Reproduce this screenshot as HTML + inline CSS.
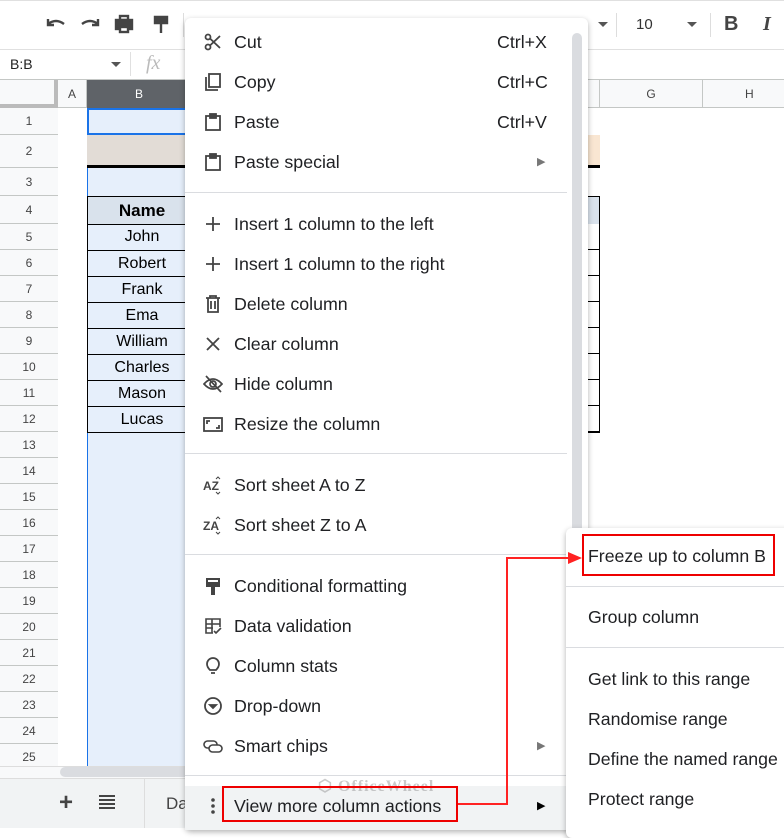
<!DOCTYPE html>
<html><head><meta charset="utf-8"><style>
*{margin:0;padding:0;box-sizing:border-box}
body{width:784px;height:828px;overflow:hidden;background:#fff;font-family:"Liberation Sans",Arial,sans-serif;position:relative;color:#202124}
.a{position:absolute}
.rn{position:absolute;left:0;width:58px;background:#f8f9fa;border-bottom:1px solid #c4c7c5;font-size:12px;color:#444;text-align:center}
.cell{position:absolute;border:1px solid #000;font-size:16px;text-align:center;color:#000}
.mi{position:absolute;left:0;font-size:17.8px;color:#202124;white-space:nowrap}
.mi .t{position:absolute;left:49px;top:-10px;line-height:20px}
.mi .k{position:absolute;left:312px;top:-10px;line-height:20px}
.ic{position:absolute;left:18px;top:-10px;width:20px;height:20px}
.hr{position:absolute;left:0;width:382px;height:1px;background:#dadce0}
.si{position:absolute;left:22px;font-size:17.7px;line-height:20px;color:#202124;white-space:nowrap}
</style></head><body>
<div class="a" style="left:0;top:0;width:784px;height:50px;background:#fff;border-top:1px solid #e0e0e0"></div>
<svg class="a" style="left:40px;top:12px" width="140" height="26" viewBox="0 0 140 26" fill="none" stroke="#444" stroke-width="2.4">
<path d="M8 12 q8-6 16 0 M8 7 v6 h6"/><path d="M58 12 q-8-6-16 0 M58 7 v6 h-6"/>
<rect x="76" y="8" width="16" height="9" fill="#444"/><rect x="80" y="4" width="8" height="4"/><rect x="80" y="15" width="8" height="5" fill="#fff"/>
<path d="M115 5 h12 v6 h-12z M121 11 v10" fill="#444"/>
</svg>
<div class="a" style="left:183px;top:13px;width:1px;height:24px;background:#ddd"></div>
<div class="a" style="left:616px;top:13px;width:1px;height:24px;background:#ddd"></div>
<div class="a" style="left:710px;top:13px;width:1px;height:24px;background:#ddd"></div>
<div class="a" style="left:598px;top:22px;border:5px solid transparent;border-top:5px solid #555"></div>
<div class="a" style="left:636px;top:16px;font-size:15px;color:#333">10</div>
<div class="a" style="left:687px;top:22px;border:5px solid transparent;border-top:5px solid #555"></div>
<div class="a" style="left:724px;top:13px;font-size:20px;font-weight:bold;color:#444">B</div>
<div class="a" style="left:763px;top:13px;font-size:20px;font-style:italic;font-weight:bold;color:#444;font-family:'Liberation Serif',serif">I</div>
<div class="a" style="left:0;top:49px;width:784px;height:1px;background:#e0e0e0"></div>
<div class="a" style="left:10px;top:56px;font-size:14px;color:#222">B:B</div>
<div class="a" style="left:111px;top:62px;border:5px solid transparent;border-top:5px solid #555"></div>
<div class="a" style="left:130px;top:52px;width:1px;height:24px;background:#e0e0e0"></div>
<div class="a" style="left:146px;top:52px;font-size:20px;font-style:italic;color:#bbb;font-family:'Liberation Serif',serif">fx</div>
<div class="a" style="left:0;top:79px;width:784px;height:1px;background:#c4c7c5"></div>
<div class="a" style="left:0;top:80px;width:58px;height:28px;background:#f8f9fa;border-right:4px solid #bbb;border-bottom:4px solid #bbb"></div>
<div class="a" style="left:58px;top:80px;width:29px;height:28px;background:#f8f9fa;border-right:1px solid #c4c7c5;border-bottom:1px solid #c4c7c5;font-size:12px;text-align:center;line-height:28px;color:#444">A</div>
<div class="a" style="left:87px;top:80px;width:110px;height:28px;background:#5f6368;color:#fff;font-size:12px;text-align:center;line-height:28px"><span style="position:absolute;left:48px">B</span></div>
<div class="a" style="left:588px;top:80px;width:196px;height:28px;background:#f8f9fa;border-bottom:1px solid #c4c7c5"></div>
<div class="a" style="left:599px;top:80px;width:104px;height:28px;border-left:1px solid #c4c7c5;border-right:1px solid #c4c7c5;font-size:12px;text-align:center;line-height:28px;color:#444">G</div>
<div class="a" style="left:745px;top:80px;font-size:12px;line-height:28px;color:#444">H</div>
<div class="a" style="left:0;top:108px;width:58px;height:658px;background:#f8f9fa;border-right:1px solid #c4c7c5"></div>
<div class="rn" style="top:108px;height:27px;line-height:27px">1</div>
<div class="rn" style="top:135px;height:33px;line-height:33px">2</div>
<div class="rn" style="top:168px;height:28px;line-height:28px">3</div>
<div class="rn" style="top:196px;height:28px;line-height:28px">4</div>
<div class="rn" style="top:224px;height:26px;line-height:26px">5</div>
<div class="rn" style="top:250px;height:26px;line-height:26px">6</div>
<div class="rn" style="top:276px;height:26px;line-height:26px">7</div>
<div class="rn" style="top:302px;height:26px;line-height:26px">8</div>
<div class="rn" style="top:328px;height:26px;line-height:26px">9</div>
<div class="rn" style="top:354px;height:26px;line-height:26px">10</div>
<div class="rn" style="top:380px;height:26px;line-height:26px">11</div>
<div class="rn" style="top:406px;height:26px;line-height:26px">12</div>
<div class="rn" style="top:432px;height:26px;line-height:26px">13</div>
<div class="rn" style="top:458px;height:26px;line-height:26px">14</div>
<div class="rn" style="top:484px;height:26px;line-height:26px">15</div>
<div class="rn" style="top:510px;height:26px;line-height:26px">16</div>
<div class="rn" style="top:536px;height:26px;line-height:26px">17</div>
<div class="rn" style="top:562px;height:26px;line-height:26px">18</div>
<div class="rn" style="top:588px;height:26px;line-height:26px">19</div>
<div class="rn" style="top:614px;height:26px;line-height:26px">20</div>
<div class="rn" style="top:640px;height:26px;line-height:26px">21</div>
<div class="rn" style="top:666px;height:26px;line-height:26px">22</div>
<div class="rn" style="top:692px;height:26px;line-height:26px">23</div>
<div class="rn" style="top:718px;height:26px;line-height:26px">24</div>
<div class="rn" style="top:744px;height:22px;line-height:26px;border-bottom:none">25</div>
<div class="a" style="left:87px;top:108px;width:110px;height:658px;background:#e6effb;border-left:1px solid #1a73e8"></div>
<div class="a" style="left:87px;top:108px;width:110px;height:27px;border:2px solid #1a73e8"></div>
<div class="a" style="left:87px;top:135px;width:513px;height:33px;background:#f9e6d2;border-bottom:3px solid #000"></div>
<div class="a" style="left:87px;top:135px;width:110px;height:33px;background:#e2dcd6;border-bottom:3px solid #000"></div>
<div class="cell" style="left:87px;top:196px;width:513px;height:29px;background:#d9e2ec"></div>
<div class="cell" style="left:87px;top:196px;width:110px;height:29px;font-weight:bold;font-size:17px;line-height:27px">Name</div>
<div class="cell" style="left:87px;top:224px;width:513px;height:209px;border-top:none"></div>
<div class="cell" style="left:87px;top:224px;width:110px;height:27px;line-height:26px;border-top:none">John</div>
<div class="cell" style="left:87px;top:250px;width:110px;height:27px;line-height:26px">Robert</div>
<div class="cell" style="left:87px;top:276px;width:110px;height:27px;line-height:26px">Frank</div>
<div class="cell" style="left:87px;top:302px;width:110px;height:27px;line-height:26px">Ema</div>
<div class="cell" style="left:87px;top:328px;width:110px;height:27px;line-height:26px">William</div>
<div class="cell" style="left:87px;top:354px;width:110px;height:27px;line-height:26px">Charles</div>
<div class="cell" style="left:87px;top:380px;width:110px;height:27px;line-height:26px">Mason</div>
<div class="cell" style="left:87px;top:406px;width:110px;height:27px;line-height:26px">Lucas</div>
<div class="a" style="left:588px;top:224px;width:12px;height:209px;border-bottom:1px solid #000;border-right:1px solid #000;background:repeating-linear-gradient(#fff 0 25px,#000 25px 26px)"></div>
<div class="a" style="left:0;top:766px;width:784px;height:12px;background:#f8f9fa;border-top:1px solid #ddd"></div>
<div class="a" style="left:60px;top:767px;width:130px;height:10px;background:#dadce0;border-radius:5px"></div>
<div class="a" style="left:0;top:778px;width:784px;height:50px;background:#f1f3f4;border-top:1px solid #ddd"></div>
<div class="a" style="left:59px;top:789px;font-size:24px;color:#444;font-weight:bold">+</div>
<div class="a" style="left:99px;top:795px;width:16px;height:14px;background:repeating-linear-gradient(#444 0 2px,transparent 2px 4px)"></div>
<div class="a" style="left:144px;top:778px;width:1px;height:50px;background:#ddd"></div>
<div class="a" style="left:166px;top:794px;font-size:17px;color:#444">Da</div>
<div class="a" style="left:185px;top:18px;width:403px;height:812px;background:#fff;border-radius:6px;box-shadow:0 2px 6px rgba(0,0,0,.3)">
<div class="a" style="left:387px;top:15px;width:10px;height:797px;background:#dadce0;border-radius:5px"></div>
<div class="a" style="left:0;top:768px;width:387px;height:44px;background:#f1f3f4"></div>
<div class="mi" style="top:24px"><svg class="ic" viewBox="0 0 20 20" fill="none" stroke="#444" stroke-width="1.8"><circle cx="5" cy="5" r="2.5"/><circle cx="5" cy="15" r="2.5"/><path d="M7 6.5 L17 16 M7 13.5 L17 4"/></svg><span class="t">Cut</span><span class="k">Ctrl+X</span></div>
<div class="mi" style="top:64px"><svg class="ic" viewBox="0 0 20 20" fill="none" stroke="#444" stroke-width="1.8"><path d="M3 5 v13 h12"/><rect x="6" y="2" width="11" height="13"/></svg><span class="t">Copy</span><span class="k">Ctrl+C</span></div>
<div class="mi" style="top:104px"><svg class="ic" viewBox="0 0 20 20" fill="none" stroke="#444" stroke-width="1.8"><rect x="3" y="4" width="14" height="14"/><rect x="7" y="2" width="6" height="4" fill="#444"/></svg><span class="t">Paste</span><span class="k">Ctrl+V</span></div>
<div class="mi" style="top:144px"><svg class="ic" viewBox="0 0 20 20" fill="none" stroke="#444" stroke-width="1.8"><rect x="3" y="4" width="14" height="14"/><rect x="7" y="2" width="6" height="4" fill="#444"/></svg><span class="t">Paste special</span><span class="k" style="left:352px;font-size:11px;color:#777">▶</span></div>
<div class="hr" style="top:174px"></div>
<div class="mi" style="top:206px"><svg class="ic" viewBox="0 0 20 20" stroke="#444" stroke-width="1.8"><path d="M10 3 v14 M3 10 h14"/></svg><span class="t">Insert 1 column to the left</span></div>
<div class="mi" style="top:246px"><svg class="ic" viewBox="0 0 20 20" stroke="#444" stroke-width="1.8"><path d="M10 3 v14 M3 10 h14"/></svg><span class="t">Insert 1 column to the right</span></div>
<div class="mi" style="top:286px"><svg class="ic" viewBox="0 0 20 20" fill="none" stroke="#444" stroke-width="1.8"><path d="M3 4 h14 M5 4 v14 h10 v-14 M8 7 v8 M12 7 v8 M7 4 v-2 h6 v2"/></svg><span class="t">Delete column</span></div>
<div class="mi" style="top:326px"><svg class="ic" viewBox="0 0 20 20" stroke="#444" stroke-width="1.8"><path d="M4 4 L16 16 M16 4 L4 16"/></svg><span class="t">Clear column</span></div>
<div class="mi" style="top:366px"><svg class="ic" viewBox="0 0 20 20" fill="none" stroke="#444" stroke-width="1.7"><path d="M1 10 q9-10 18 0 q-9 10-18 0z"/><circle cx="10" cy="10" r="3"/><path d="M3 2 L18 18"/></svg><span class="t">Hide column</span></div>
<div class="mi" style="top:406px"><svg class="ic" viewBox="0 0 20 20" fill="none" stroke="#444" stroke-width="1.8"><rect x="1" y="4" width="18" height="13"/><path d="M4 10 v-3 h3 M16 11 v3 h-3"/></svg><span class="t">Resize the column</span></div>
<div class="hr" style="top:435px"></div>
<div class="mi" style="top:467px"><svg class="ic" viewBox="0 0 20 20"><text x="0" y="15" font-size="12" font-family="Liberation Sans" fill="#444" font-weight="bold">AZ</text><path d="M13 4 l2-2 l2 2 M13 17 l2 2 l2-2" stroke="#444" fill="none"/></svg><span class="t">Sort sheet A to Z</span></div>
<div class="mi" style="top:507px"><svg class="ic" viewBox="0 0 20 20"><text x="0" y="15" font-size="12" font-family="Liberation Sans" fill="#444" font-weight="bold">ZA</text><path d="M13 4 l2-2 l2 2 M13 17 l2 2 l2-2" stroke="#444" fill="none"/></svg><span class="t">Sort sheet Z to A</span></div>
<div class="hr" style="top:536px"></div>
<div class="mi" style="top:568px"><svg class="ic" viewBox="0 0 20 20" fill="#444"><rect x="3" y="2" width="14" height="9"/><rect x="5" y="4" width="10" height="2" fill="#fff"/><rect x="8" y="11" width="4" height="8"/></svg><span class="t">Conditional formatting</span></div>
<div class="mi" style="top:608px"><svg class="ic" viewBox="0 0 20 20" fill="none" stroke="#444" stroke-width="1.6"><path d="M10 17 H3 V3 h14 v8 M3 8 h14 M3 12 h7 M9 3 v14 M11 15 l2 2 l5-5"/></svg><span class="t">Data validation</span></div>
<div class="mi" style="top:648px"><svg class="ic" viewBox="0 0 20 20" fill="none" stroke="#444" stroke-width="1.8"><path d="M7 14 q-3-3-3-6 a6 6 0 0 1 12 0 q0 3-3 6z M8 17 h4"/></svg><span class="t">Column stats</span></div>
<div class="mi" style="top:688px"><svg class="ic" viewBox="0 0 20 20" fill="none" stroke="#444" stroke-width="1.8"><circle cx="10" cy="10" r="8"/><path d="M7 9 h6 l-3 3z" fill="#444"/></svg><span class="t">Drop-down</span></div>
<div class="mi" style="top:728px"><svg class="ic" viewBox="0 0 20 20" fill="none" stroke="#444" stroke-width="1.6"><rect x="1" y="5" width="13" height="7" rx="3.5"/><rect x="6" y="9" width="13" height="7" rx="3.5" fill="#fff"/></svg><span class="t">Smart chips</span><span class="k" style="left:352px;font-size:11px;color:#777">▶</span></div>
<div class="hr" style="top:757px"></div>
<div class="mi" style="top:788px"><svg class="ic" viewBox="0 0 20 20" fill="#444"><circle cx="10" cy="4" r="1.8"/><circle cx="10" cy="10" r="1.8"/><circle cx="10" cy="16" r="1.8"/></svg><span class="t">View more column actions</span><span class="k" style="left:352px;font-size:11px;color:#000">▶</span></div>
</div>
<div class="a" style="left:318px;top:776px;font-size:16px;color:rgba(150,150,150,.5);letter-spacing:1px;font-family:'Liberation Serif',serif;font-weight:bold">&#x2B21; OfficeWheel</div>
<div class="a" style="left:566px;top:528px;width:230px;height:310px;background:#fff;border-radius:6px;box-shadow:0 2px 6px rgba(0,0,0,.3)">
<div class="si" style="top:18px">Freeze up to column B</div>
<div class="hr" style="top:58px;left:0"></div>
<div class="si" style="top:79px">Group column</div>
<div class="hr" style="top:119px;left:0"></div>
<div class="si" style="top:141px">Get link to this range</div>
<div class="si" style="top:181px">Randomise range</div>
<div class="si" style="top:221px">Define the named range</div>
<div class="si" style="top:261px">Protect range</div>
</div>
<div class="a" style="left:582px;top:534px;width:193px;height:42px;border:2px solid #e00"></div>
<div class="a" style="left:222px;top:786px;width:236px;height:36px;border:2px solid #e00"></div>
<svg class="a" style="left:0;top:0" width="784" height="828"><path d="M458 804 H507 V558 H570" fill="none" stroke="#f22" stroke-width="2"/><path d="M568 552 L582 558 L568 564z" fill="#f22"/></svg>
</body></html>
